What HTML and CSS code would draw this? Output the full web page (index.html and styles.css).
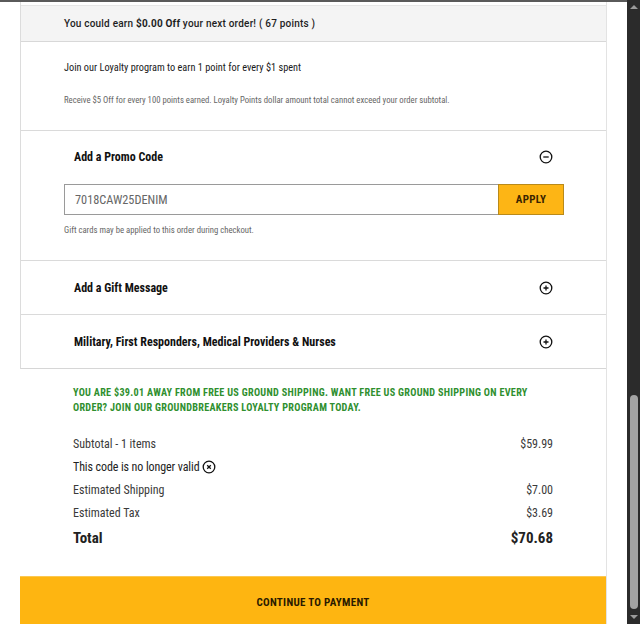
FILE: index.html
```html
<!DOCTYPE html>
<html lang="en">
<head>
  <meta charset="UTF-8">
  <meta name="viewport" content="width=device-width, initial-scale=1.0">
  <title>Order Summary</title>
  <link rel="stylesheet" href="styles.css">
</head>
<body>
  <div class="viewport">
    <div class="cart">
      <div class="boxed">
        <div class="earn">You could earn <b>$0.00 Off</b> your next order! ( 67 points )</div>

        <div class="loyalty">
          <p class="join">Join our Loyalty program to earn 1 point for every $1 spent</p>
          <p class="fine">Receive $5 Off for every 100 points earned. Loyalty Points dollar amount total cannot exceed your order subtotal.</p>
        </div>

        <div class="section promo">
          <div class="section-head">
            <span>Add a Promo Code</span>
            <svg class="toggle" viewBox="0 0 14 14"><circle cx="7" cy="7" r="5.8"/><path d="M4.3 7h5.4"/></svg>
          </div>
          <div class="promo-row">
            <input type="text" value="7018CAW25DENIM">
            <button class="apply">APPLY</button>
          </div>
          <p class="fine">Gift cards may be applied to this order during checkout.</p>
        </div>

        <div class="section">
          <div class="section-head">
            <span>Add a Gift Message</span>
            <svg class="toggle" viewBox="0 0 14 14"><circle cx="7" cy="7" r="5.8"/><path d="M4.5 7h5M7 4.5v5"/></svg>
          </div>
        </div>

        <div class="section">
          <div class="section-head">
            <span>Military, First Responders, Medical Providers &amp; Nurses</span>
            <svg class="toggle" viewBox="0 0 14 14"><circle cx="7" cy="7" r="5.8"/><path d="M4.5 7h5M7 4.5v5"/></svg>
          </div>
        </div>
      </div>

      <div class="summary">
        <p class="shipping-note">You are $39.01 away from free US ground shipping. Want free US ground shipping on every order? Join our Groundbreakers Loyalty Program today.</p>
        <div class="line"><span>Subtotal - 1 items</span><span>$59.99</span></div>
        <div class="line"><span class="invalid">This code is no longer valid
          <svg viewBox="0 0 14 14"><circle cx="7" cy="7" r="5.8"/><path d="M5.2 5.2l3.6 3.6M8.8 5.2l-3.6 3.6"/></svg></span></div>
        <div class="line"><span>Estimated Shipping</span><span>$7.00</span></div>
        <div class="line"><span>Estimated Tax</span><span>$3.69</span></div>
        <div class="line total"><span>Total</span><span>$70.68</span></div>
      </div>

      <button class="pay">CONTINUE TO PAYMENT</button>
    </div>
  </div>

  <div class="scrollbar">
    <div class="arrow up"></div>
    <div class="track"><div class="thumb"></div></div>
    <div class="arrow down"></div>
  </div>
</body>
</html>
```

FILE: styles.css
```css
body {
  margin: 0;
  height: 624px;
  overflow: hidden;
  display: flex;
  background: #fff;
  color: #222;
  font-family: "Roboto Condensed", "DejaVu Sans Condensed", sans-serif;
}
.viewport {
  flex: 1;
  border-top: 2px solid #5a5a5a;
  overflow: hidden;
}
.cart {
  margin: 0 20px;
  border-right: 1px solid #e3e3e3;
}
.boxed {
  border-left: 1px solid #dcdcdc;
  border-bottom: 1px solid #d6d6d6;
  padding-top: 3px;
}
.earn {
  background: #f4f4f4;
  border-top: 1px solid #e6e6e6;
  border-bottom: 1px solid #d8d8d8;
  padding: 11px 0 11px 43px;
  line-height: 13px;
  font-family: Roboto, "Liberation Sans", sans-serif;
  font-size: 10px;
  font-weight: 500;
  letter-spacing: 0.2px;
  color: #1e1e1e;
}
.earn b {
  font-weight: 700;
}
.loyalty {
  padding: 19px 0 24px 43px;
  border-bottom: 1px solid #dadada;
}
.join {
  margin: 0;
  line-height: 14px;
  font-size: 10.3px;
  color: #1a1a1a;
}
.fine {
  margin: 0;
  line-height: 12px;
  font-size: 8.7px;
  color: #666;
}
.loyalty .fine {
  margin-top: 19px;
}
.section {
  border-bottom: 1px solid #dadada;
}
.section:last-child {
  border-bottom: none;
}
.section-head {
  height: 53px;
  display: flex;
  align-items: center;
  justify-content: space-between;
  padding: 0 53px;
  font-size: 12px;
  font-weight: bold;
  color: #111;
}
.toggle {
  width: 14px;
  height: 14px;
  fill: none;
  stroke: #111;
  stroke-width: 1.3;
}
.promo {
  padding-bottom: 24px;
}
.promo .section-head {
  height: 52px;
}
.promo-row {
  display: flex;
  margin: 1px 42px 0 43px;
  height: 31px;
}
.promo-row input {
  flex: 1;
  border: 1px solid #9a9a9a;
  border-right: none;
  padding: 0 0 0 10px;
  font-family: inherit;
  font-size: 12.3px;
  color: #666;
  outline: none;
}
.apply {
  width: 66px;
  background: #fdb515;
  border: 1px solid #b98a1a;
  font-family: inherit;
  font-size: 11px;
  font-weight: bold;
  color: #3a2400;
  letter-spacing: 0.3px;
}
.promo .fine {
  margin: 9px 0 0 43px;
}
.summary {
  padding: 16px 53px 25px;
}
.shipping-note {
  margin: 0 0 17px;
  text-transform: uppercase;
  font-size: 10.2px;
  font-weight: bold;
  letter-spacing: 0.28px;
  line-height: 15px;
  color: #2f8f2f;
}
.line {
  display: flex;
  justify-content: space-between;
  align-items: center;
  height: 23px;
  font-size: 12px;
  color: #3a3a3a;
}
.invalid {
  display: flex;
  align-items: center;
  gap: 2px;
  letter-spacing: -0.1px;
  color: #222;
}
.invalid svg {
  width: 14px;
  height: 14px;
  fill: none;
  stroke: #111;
  stroke-width: 1.3;
}
.total {
  height: 27px;
  font-size: 15px;
  font-weight: bold;
  color: #222;
}
.pay {
  display: block;
  width: 100%;
  height: 52px;
  background: #feb511;
  border: none;
  border-top: 1px solid #fcc850;
  font-family: inherit;
  font-size: 11px;
  font-weight: bold;
  letter-spacing: 0.3px;
  color: #2a1a00;
}
.scrollbar {
  width: 13px;
  background: #2b2b2b;
  display: flex;
  flex-direction: column;
  align-items: center;
}
.arrow {
  width: 0;
  height: 0;
  border-left: 4px solid transparent;
  border-right: 4px solid transparent;
  margin: 5px 0;
}
.arrow.up {
  border-bottom: 4px solid #9a9a9a;
}
.arrow.down {
  border-top: 4px solid #9a9a9a;
}
.track {
  flex: 1;
  width: 100%;
  display: flex;
  flex-direction: column;
  justify-content: flex-end;
  align-items: center;
}
.thumb {
  width: 8px;
  height: 214px;
  background: #a3a3a3;
  border-radius: 4px;
  margin-bottom: 1px;
}
```
